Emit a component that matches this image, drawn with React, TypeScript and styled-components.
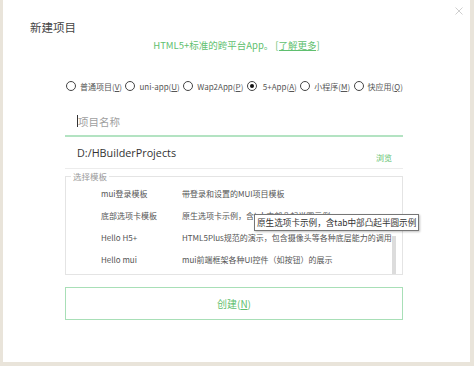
import React from "react";
import styled, { createGlobalStyle } from "styled-components";

const Global = createGlobalStyle`
  html, body { margin: 0; padding: 0; }
  body {
    background: #e9e4da;
    width: 474px;
    height: 366px;
    overflow: hidden;
    font-family: "Noto Sans", "Noto Sans CJK SC", sans-serif;
  }
`;

const Dialog = styled.div`
  position: relative;
  margin-left: 3px;
  width: 467px;
  height: 362px;
  background: #ffffff;
  box-sizing: border-box;
  padding: 18px 0 0 0;
  display: flex;
  flex-direction: column;
`;

const Close = styled.div`
  position: absolute;
  right: 7px;
  top: 7px;
  width: 8px;
  height: 8px;
  color: #cfcfcf;
  display: flex;
`;

const Title = styled.div`
  margin-left: 27px;
  font-size: 11.5px;
  line-height: 18px;
  color: #444;
  font-family: "Noto Sans CJK SC", sans-serif;
`;

const Subtitle = styled.div`
  margin-top: 1px;
  text-align: center;
  font-size: 9.5px;
  line-height: 16px;
  color: #5fbf6f;
  font-family: "Noto Sans CJK SC", sans-serif;
`;

const Link = styled.span`
  text-decoration: underline;
  margin-left: 2px;
`;

const Body = styled.div`
  margin: 26px 0 0 62px;
  width: 338px;
  display: flex;
  flex-direction: column;
`;

const RadioRow = styled.div`
  display: flex;
  align-items: center;
  justify-content: space-between;
  height: 14px;
  padding: 0 0 0 1px;
`;

const RadioItem = styled.label`
  display: flex;
  align-items: center;
  gap: 4px;
  font-size: 8px;
  color: #555;
  font-family: "Noto Sans CJK SC", sans-serif;
  white-space: nowrap;
`;

const Circle = styled.span<{ $on?: boolean }>`
  width: 8px;
  height: 8px;
  border: 1px solid #444;
  border-radius: 50%;
  display: flex;
  align-items: center;
  justify-content: center;
  margin-right: ${(p) => (p.$on ? "2px" : "0")};
  &::after {
    content: "";
    display: ${(p) => (p.$on ? "block" : "none")};
    width: 4px;
    height: 4px;
    border-radius: 50%;
    background: #111;
  }
`;

const U = styled.span`
  text-decoration: underline;
`;

const NameField = styled.div`
  margin-top: 14px;
  height: 28px;
  border-bottom: 2px solid #b3e3c2;
  display: flex;
  align-items: center;
  padding-left: 12px;
  font-size: 10.5px;
  color: #a0a0a0;
  font-family: "Noto Sans CJK SC", sans-serif;
`;

const Caret = styled.span`
  display: inline-block;
  width: 1px;
  height: 12px;
  background: #333;
`;

const PathRow = styled.div`
  height: 31px;
  border-bottom: 1px solid #ececec;
  display: flex;
  align-items: center;
  justify-content: space-between;
  padding: 0 11px 0 12px;
`;

const PathText = styled.span`
  font-size: 10.8px;
  color: #333;
  font-family: "Open Sans", "Noto Sans CJK SC", sans-serif;
`;

const Browse = styled.span`
  font-size: 8px;
  color: #5fbf6f;
  margin-top: 10px;
  font-family: "Noto Sans CJK SC", sans-serif;
`;

const Fieldset = styled.fieldset`
  margin: 2px 0 0 0;
  padding: 0 0 4px 0;
  border: 1px solid #e4e4e4;
  position: relative;
  min-width: 0;
`;

const Legend = styled.legend`
  font-size: 8.5px;
  color: #999;
  padding: 0 2px;
  margin-left: 5px;
  line-height: 11px;
  font-family: "Noto Sans CJK SC", sans-serif;
`;

const TplRow = styled.div`
  display: grid;
  grid-template-columns: 81px 1fr;
  padding-left: 35px;
  height: 22px;
  align-items: center;
  font-size: 8px;
  color: #555;
  font-family: "Noto Sans CJK SC", sans-serif;
  white-space: nowrap;
`;

const Scrollbar = styled.div`
  position: absolute;
  right: 6px;
  top: 54px;
  width: 4px;
  height: 38px;
  background: #dcdcdc;
`;

const Tooltip = styled.div`
  position: absolute;
  left: 188px;
  top: 32px;
  padding: 0 2px;
  height: 15px;
  line-height: 15px;
  background: #fff;
  border: 1px solid #767676;
  box-shadow: 1px 1px 2px rgba(0, 0, 0, 0.25);
  font-size: 8.6px;
  color: #333;
  white-space: nowrap;
  font-family: "Noto Sans CJK SC", sans-serif;
`;

const CreateButton = styled.button`
  margin-top: 12px;
  height: 33px;
  width: 100%;
  background: #fff;
  border: 1px solid #a8dfb7;
  color: #5fbf6f;
  font-size: 10px;
  font-family: "Noto Sans CJK SC", sans-serif;
  cursor: pointer;
`;

const radios = [
  { label: "普通项目(", key: "V", on: false },
  { label: "uni-app(", key: "U", on: false },
  { label: "Wap2App(", key: "P", on: false },
  { label: "5+App(", key: "A", on: true },
  { label: "小程序(", key: "M", on: false },
  { label: "快应用(", key: "Q", on: false },
];

const templates = [
  ["mui登录模板", "带登录和设置的MUI项目模板"],
  ["底部选项卡模板", "原生选项卡示例，含tab中部凸起半圆示例"],
  ["Hello H5+", "HTML5Plus规范的演示，包含摄像头等各种底层能力的调用"],
  ["Hello mui", "mui前端框架各种UI控件（如按钮）的展示"],
];

export default function App() {
  return (
    <>
      <Global />
      <Dialog>
        <Close>
          <svg width="8" height="8" viewBox="0 0 8 8">
            <path d="M0.5 0.5 L7.5 7.5 M7.5 0.5 L0.5 7.5" stroke="currentColor" strokeWidth="1" />
          </svg>
        </Close>
        <Title>新建项目</Title>
        <Subtitle>
          HTML5+标准的跨平台App。<Link>[了解更多]</Link>
        </Subtitle>
        <Body>
          <RadioRow>
            {radios.map((r) => (
              <RadioItem key={r.key}>
                <Circle $on={r.on} />
                <span>
                  {r.label}
                  <U>{r.key}</U>)
                </span>
              </RadioItem>
            ))}
          </RadioRow>
          <NameField>
            <Caret />
            项目名称
          </NameField>
          <PathRow>
            <PathText>D:/HBuilderProjects</PathText>
            <Browse>浏览</Browse>
          </PathRow>
          <Fieldset>
            <Legend>选择模板</Legend>
            {templates.map(([a, b]) => (
              <TplRow key={a}>
                <span>{a}</span>
                <span>{b}</span>
              </TplRow>
            ))}
            <Scrollbar />
            <Tooltip>原生选项卡示例，含tab中部凸起半圆示例</Tooltip>
          </Fieldset>
          <CreateButton>
            创建(<U>N</U>)
          </CreateButton>
        </Body>
      </Dialog>
    </>
  );
}
